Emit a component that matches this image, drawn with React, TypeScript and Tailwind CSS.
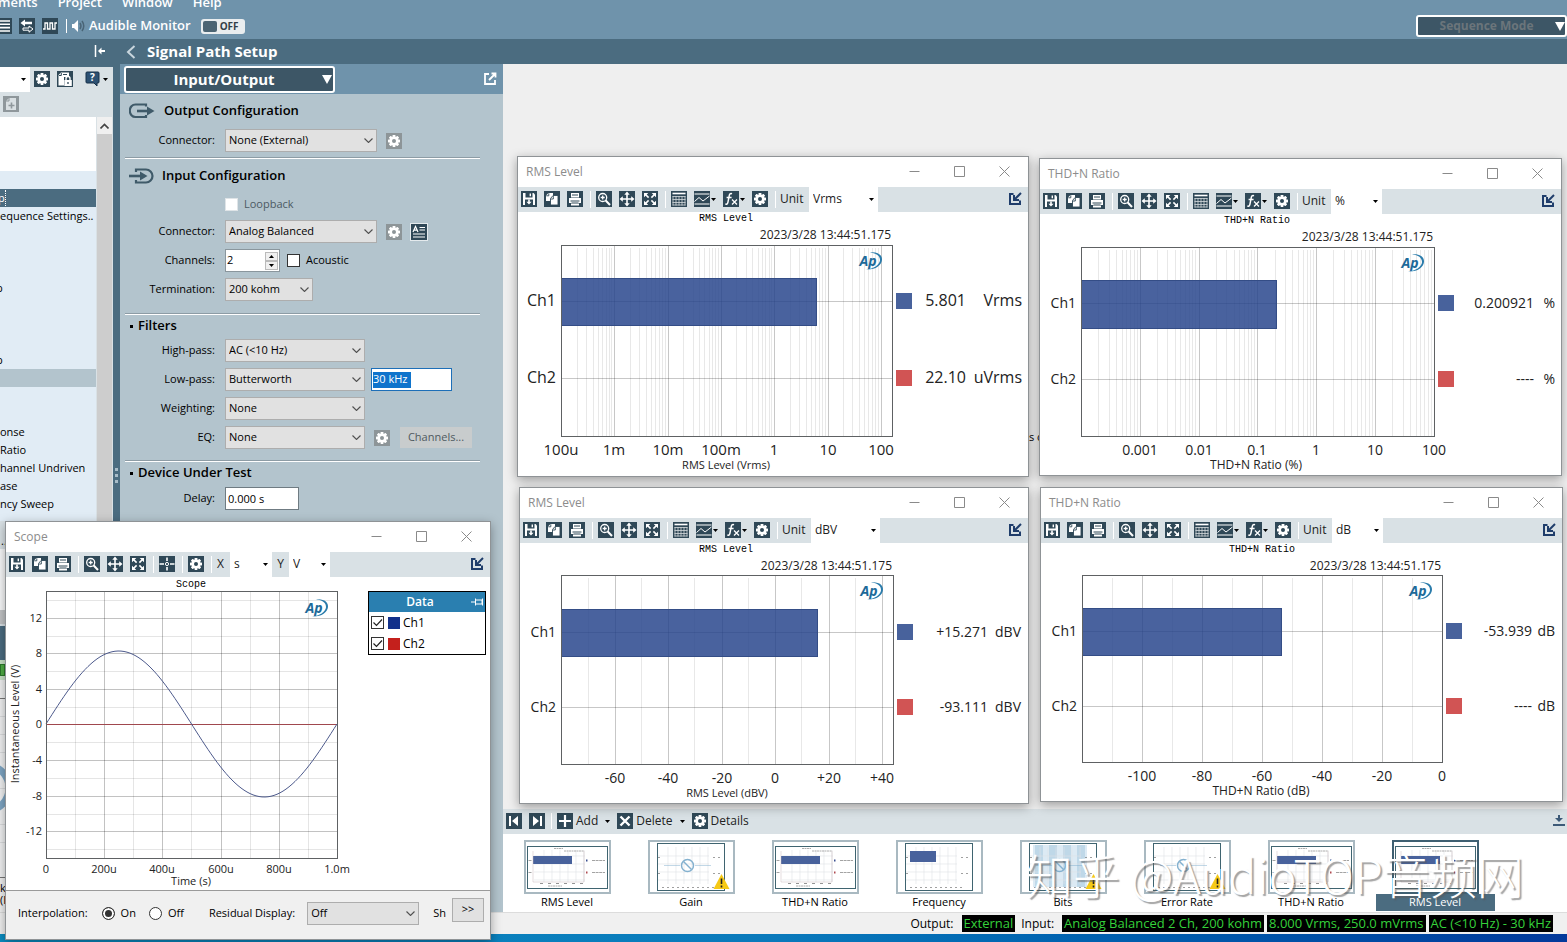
import React from "react";

/* ---------- icons ---------- */

type IconName =
  | "save" | "copy" | "print" | "zoom" | "move" | "expand" | "table" | "graph"
  | "fx" | "gear" | "cross" | "list" | "swap" | "wave" | "lock" | "first"
  | "last" | "plus" | "times" | "card" | "addPage";

const GEAR_TEETH = [0, 45, 90, 135, 180, 225, 270, 315];

function Gear({ hole }: { hole: string }) {
  return (
    <g>
      {GEAR_TEETH.map((a) => (
        <rect key={a} x="6.6" y="2" width="2.800" height="4" rx="0.4" fill="#fff" transform={`rotate(${a} 8 8)`} />
      ))}
      <circle cx="8" cy="8" r="4.500" fill="#fff" />
      <circle cx="8" cy="8" r="2" fill={hole} />
    </g>
  );
}

function glyph(name: IconName, bg: string) {
  const line = { stroke: "#fff", fill: "none", strokeWidth: 1.3 };
  switch (name) {
    case "save":
      return (
        <g>
          <path d="M2 2h10.5L14 3.5V14H2z" fill="#fff" />
          <path d="M4.500 2h7v4.500h-7zM4 8.500h8V14H4z" fill={bg} />
          <path d="M7.200 8.500h1.600v2.200h1.800L8 13.400l-2.600-2.700h1.800z" fill="#fff" />
          <path d="M8.600 2.600h1.400v2.600H8.600z" fill="#fff" />
        </g>
      );
    case "copy":
      return (
        <g>
          <path d="M2 4.500L4.500 2H9v8H2z" fill="#fff" />
          <path d="M6.500 7.500L9 4.500H14V14H6.500z" fill="#fff" stroke={bg} strokeWidth="0.9" />
          <path d="M4.800 2.300v2.500H2.300M9.300 5v3H6.800" stroke={bg} strokeWidth="0.9" fill="none" />
        </g>
      );
    case "print":
      return (
        <g>
          <path d="M4 2h8v4.500H4zM2 7h12v5H2z" fill="#fff" />
          <path d="M5 4h6M3.500 10h9M4.500 12h7" stroke={bg} strokeWidth="1" />
          <path d="M4 12.500h8V14.500H4z" fill="#fff" />
        </g>
      );
    case "zoom":
      return (
        <g {...line}>
          <circle cx="6.700" cy="6.500" r="4" />
          <path d="M4.700 6.500h4M6.700 4.500v4" />
          <path d="M9.700 9.500L14 14" strokeWidth="2" />
        </g>
      );
    case "move":
      return (
        <g>
          <path d="M8 3v10M3 8h10" {...line} strokeWidth={1.600} />
          <path d="M8 0.500l2.700 3.300H5.300zM8 15.500l2.700-3.300H5.300zM0.500 8l3.300-2.700v5.400zM15.500 8l-3.300-2.700v5.400z" fill="#fff" />
        </g>
      );
    case "expand":
      return (
        <g>
          <path d="M3 3l3.600 3.600M13 3L9.400 6.600M3 13l3.600-3.600M13 13L9.400 9.400" stroke="#fff" strokeWidth="1.600" />
          <path d="M2 2h4.300L2 6.300zM14 2v4.300L9.700 2zM2 14V9.700L6.300 14zM14 14H9.700L14 9.700z" fill="#fff" />
        </g>
      );
    case "table":
      return (
        <g>
          <path d="M1.500 2.500h13" stroke="#fff" strokeWidth="1.600" />
          <path d="M1.500 5.500h13M1.500 8.500h13M1.500 11.500h13M1.500 14h13M2 5v9.500M5 5v9.500M8 5v9.500M11 5v9.500M14 5v9.500" stroke="#fff" strokeWidth="0.800" opacity="0.800" />
        </g>
      );
    case "graph":
      return (
        <g>
          <path d="M0.500 3h15M0.500 13h15" stroke="#fff" strokeWidth="1.200" />
          <path d="M0.500 10.500L5 6.500L9 10L15.500 5" {...line} strokeWidth={1} />
        </g>
      );
    case "fx":
      return (
        <g {...line}>
          <path d="M9 2.800C7.300 2 6.500 3 6.200 4.800L4.900 11.400C4.600 13 3.600 13.600 2.300 12.900M3.600 6.500h5" strokeWidth="1.500" />
          <path d="M9 8.500l5 5M14 8.500l-5 5" />
        </g>
      );
    case "gear":
      return <Gear hole={bg} />;
    case "cross":
      return (
        <g {...line}>
          <path d="M8 1.500v3.500M8 11v3.500M0.500 8H5M11 8h4.500" strokeWidth="1.600" />
          <circle cx="8" cy="8" r="1.600" strokeWidth="1" />
        </g>
      );
    case "list":
      return <path d="M2 3h12M2 6.300h12M2 9.600h12M2 13h12" stroke="#fff" strokeWidth="1.600" />;
    case "swap":
      return (
        <g>
          <path d="M1.500 5L6 1.500v2.200h7v2.600H6v2.200z" fill="#fff" />
          <path d="M14 11l-4-3v2H4v2.200h6v2z" fill="none" stroke="#fff" />
        </g>
      );
    case "wave":
      return <path d="M1 11h2V5h2.500v6H8V5h2.500v6H13V5h2" {...line} />;
    case "lock":
      return (
        <g>
          <path d="M1.500 4L4 1.500h8V6H7v8.500H1.500z" fill="#fff" />
          <path d="M4.300 2v2.500H2" stroke={bg} fill="none" />
          <path d="M6 3.500h4" stroke={bg} />
          <rect x="7.300" y="9" width="7.500" height="6" fill="#fff" />
          <path d="M9 9V7.500a2 2 0 0 1 4 0V9" stroke="#fff" strokeWidth="1.400" fill="none" />
          <path d="M11 11v2" stroke={bg} strokeWidth="1.300" />
        </g>
      );
    case "first":
      return <path d="M3 3h2v10H3zM12 3v10L6 8z" fill="#fff" />;
    case "last":
      return <path d="M11 3h2v10h-2zM4 3v10l6-5z" fill="#fff" />;
    case "plus":
      return <path d="M8 2v12M2 8h12" stroke="#fff" strokeWidth="2.200" />;
    case "times":
      return <path d="M3.500 3.500l9 9M12.500 3.500l-9 9" stroke="#fff" strokeWidth="2.400" />;
    case "card":
      return (
        <g>
          <path d="M2 8L4.500 2.500L7 8M2.800 6.200h3.400" stroke="#fff" strokeWidth="1.200" fill="none" />
          <path d="M8.500 3.500H14M8.500 6H14M2 10h12M2 13h12" stroke="#fff" strokeWidth="1.200" />
        </g>
      );
    case "addPage":
      return (
        <g>
          <path d="M3 5l3-3h7v12H3z" fill="#d9dfe2" />
          <path d="M6 2v3H3" stroke={bg} fill="none" />
          <path d="M8.500 6.500v6M5.500 9.500h6" stroke={bg} strokeWidth="1.600" />
        </g>
      );
  }
}

function Icon({ name, bg = "#2f4857" }: { name: IconName; bg?: string }) {
  return (
    <svg viewBox="0 0 16 16" className="block size-4 shrink-0" aria-hidden="true">
      <rect width="16" height="16" fill={bg} />
      {glyph(name, bg)}
    </svg>
  );
}

function Caret({ className = "" }: { className?: string }) {
  return (
    <svg viewBox="0 0 5 3" className={`block h-[3px] w-[5px] shrink-0 ${className}`} aria-hidden="true">
      <path d="M0 0h5L2.500 3z" fill="#000" />
    </svg>
  );
}

function IconButton({ name, label, bg, caret }: { name: IconName; label: string; bg?: string; caret?: boolean }) {
  return (
    <button type="button" aria-label={label} className="flex shrink-0 items-center gap-px">
      <Icon name={name} bg={bg} />
      {caret && <Caret />}
    </button>
  );
}

function Dock() {
  return (
    <svg viewBox="0 0 14 14" className="block size-[14px]" fill="none" stroke="#1f3d6b" strokeWidth="2" aria-hidden="true">
      <path d="M5.500 2H2v10h10V8.500" />
      <path d="M13 1L6.500 7.500" />
      <path d="M6 3v5h5" />
    </svg>
  );
}

/* ---------- form parts ---------- */

function Select({ id, value, width }: { id: string; value: string; width: string }) {
  return (
    <span className={`grid h-[23px] shrink-0 items-center ${width}`}>
      <select
        id={id}
        defaultValue={value}
        className="col-start-1 row-start-1 h-full w-full appearance-none border border-[#adadad] bg-[#e1e1e1] pl-[3px] text-black"
      >
        <option>{value}</option>
      </select>
      <svg viewBox="0 0 9 5" className="pointer-events-none col-start-1 row-start-1 mr-1 h-[5px] w-[9px] justify-self-end" aria-hidden="true">
        <path d="M0.500 0.500l4 4l4-4" fill="none" stroke="#505050" strokeWidth="1.100" />
      </svg>
    </span>
  );
}

function UnitSelect({ label, value, width }: { label: string; value: string; width: string }) {
  return (
    <span className={`grid h-[25px] shrink-0 items-center bg-white ${width}`}>
      <select aria-label={label} defaultValue={value} className="col-start-1 row-start-1 h-full w-full appearance-none bg-white pl-1 text-[12px] text-[#222]">
        <option>{value}</option>
      </select>
      <Caret className="pointer-events-none col-start-1 row-start-1 mr-1 justify-self-end" />
    </span>
  );
}

function Field({ label, htmlFor, children }: { label: string; htmlFor: string; children: React.ReactNode }) {
  return (
    <div className="flex h-[29px] items-center">
      <label htmlFor={htmlFor} className="mr-[10px] w-[95px] shrink-0 text-right">{label}</label>
      {children}
    </div>
  );
}

function Rule({ className = "" }: { className?: string }) {
  return <div className={`mr-[23px] ml-[5px] h-[2px] border-t border-b border-t-[#8d9ca5] border-b-white ${className}`} />;
}

function GroupTitle({ children }: { children: React.ReactNode }) {
  return (
    <h3 className="flex h-[22px] items-center gap-[5px] pl-[10px] text-[13px] font-semibold">
      <span className="size-[3px] bg-black" />
      {children}
    </h3>
  );
}

/* ---------- windows ---------- */

function Win({ title, place, bar, children }: { title: string; place: string; bar: React.ReactNode; children: React.ReactNode }) {
  return (
    <section aria-label={title} className={`absolute flex flex-col border border-[#8f9396] bg-white shadow-[0_3px_10px_rgba(0,0,0,0.35)] ${place}`}>
      <header className="flex h-[30px] shrink-0 items-center justify-between pr-[18px] pb-px pl-2 text-[12px] text-[#8c8c8c]">
        <h2>{title}</h2>
        <div className="flex items-center gap-[34px]">
          <button type="button" aria-label="Minimize">
            <svg viewBox="0 0 11 11" className="block size-[11px]"><path d="M0.500 5.500h10" stroke="#8a8a8a" /></svg>
          </button>
          <button type="button" aria-label="Maximize">
            <svg viewBox="0 0 11 11" className="block size-[11px]"><path d="M0.500 0.500h10v10H0.500z" stroke="#8a8a8a" fill="none" /></svg>
          </button>
          <button type="button" aria-label="Close">
            <svg viewBox="0 0 11 11" className="block size-[11px]"><path d="M0.500 0.500l10 10M10.500 0.500l-10 10" stroke="#8a8a8a" /></svg>
          </button>
        </div>
      </header>
      <div className="flex h-[25px] shrink-0 items-center bg-[#d9e1e5] pr-[6px] pb-px pl-[3px] text-[12px] text-[#222]">
        {bar}
        <button type="button" aria-label="Dock window" className="ml-auto"><Dock /></button>
      </div>
      {children}
    </section>
  );
}

function Sep() {
  return <span className="h-[17px] w-px shrink-0 bg-white" />;
}

function FileTools() {
  return (
    <div className="mr-[7px] flex gap-[7px]">
      <IconButton name="save" label="Save" />
      <IconButton name="copy" label="Copy" />
      <IconButton name="print" label="Print" />
    </div>
  );
}

function ViewTools() {
  return (
    <div className="mr-[7px] ml-[5px] flex gap-[7px]">
      <IconButton name="zoom" label="Zoom" />
      <IconButton name="move" label="Pan" />
      <IconButton name="expand" label="Fit" />
    </div>
  );
}

function MeterTools({ unit, width }: { unit: string; width: string }) {
  return (
    <>
      <FileTools />
      <Sep />
      <ViewTools />
      <Sep />
      <div className="mr-[7px] ml-[5px] flex gap-[7px]">
        <IconButton name="table" label="Table" />
        <IconButton name="graph" label="Graph" caret />
        <IconButton name="fx" label="Functions" caret />
        <IconButton name="gear" label="Settings" />
      </div>
      <Sep />
      <span className="w-[33px] shrink-0 pl-1">Unit</span>
      <UnitSelect label="Unit" value={unit} width={width} />
    </>
  );
}

function ApLogo({ x, y }: { x: number; y: number }) {
  return (
    <g transform={`translate(${x} ${y})`}>
      <text x="-2" y="5" textAnchor="middle" fontSize="14" fontWeight="700" fontStyle="italic" fill="#1d6a99">Ap</text>
      <path d="M0 -8.500C8 -9.500 12.500 -5.500 12 -1C11.300 4.500 5 9.200 -4 8.500C3.500 8 9.600 4 10 -0.700C10.200 -5 6.500 -8 0 -8.500z" fill="#2b7cab" />
    </g>
  );
}

interface Channel { name: string; y: number; value: string; unit: string; color: string }

interface BarPlot {
  view: string;
  title: string;
  titleX: number;
  titleY: number;
  stampY: number;
  axis: string;
  axisX: number;
  axisY: number;
  axisSize: number;
  box: [number, number, number, number];
  ticks: [number, string][];
  tickY: number;
  tickSize: number;
  textSize: number;
  nameX: number;
  minor: number[];
  bar: [number, number, number];
  swatchX: number;
  valueX: number;
  unitX: number;
  channels: Channel[];
}

function logMinor(start: number, decade: number, end: number) {
  const out: number[] = [];
  for (let x = start; x < end; x += decade) {
    for (let m = 2; m < 10; m++) {
      const p = x + decade * Math.log10(m);
      if (p < end) out.push(p);
    }
  }
  return out;
}

function steps(start: number, step: number, end: number) {
  const out: number[] = [];
  for (let x = start; x < end; x += step) out.push(x);
  return out;
}

function BarChart(p: BarPlot) {
  const [l, t, r, b] = p.box;
  return (
    <svg viewBox={p.view} className="block w-full" fontFamily='"Open Sans", sans-serif' fill="#222">
      <text x={p.titleX} y={p.titleY} textAnchor="middle" fontSize="10" fill="#000" fontFamily='"Liberation Mono", monospace'>{p.title}</text>
      <text x={r - 1} y={p.stampY} textAnchor="end" fontSize="12">2023/3/28 13:44:51.175</text>
      <g stroke="#000" strokeOpacity="0.090" shapeRendering="crispEdges">
        {p.minor.map((x) => <path key={x} d={`M${x} ${t + 3}V${b}`} />)}
      </g>
      <g stroke="#000" strokeOpacity="0.220" shapeRendering="crispEdges">
        {p.ticks.map(([x]) => <path key={x} d={`M${x} ${t}V${b}`} />)}
        {p.channels.map((c) => <path key={c.name} d={`M${l} ${c.y}H${r}`} />)}
      </g>
      <rect x={l} y={p.bar[0]} width={p.bar[2] - l} height={p.bar[1] - p.bar[0]} fill="#26448c" fillOpacity="0.840" stroke="#344d86" shapeRendering="crispEdges" />
      <rect x={l} y={t} width={r - l} height={b - t} fill="none" stroke="#5e6163" shapeRendering="crispEdges" />
      <ApLogo x={r - 22} y={t + 16} />
      {p.ticks.map(([x, s]) => <text key={s} x={x} y={p.tickY} textAnchor="middle" fontSize={p.tickSize}>{s}</text>)}
      <text x={p.axisX} y={p.axisY} textAnchor="middle" fontSize={p.axisSize}>{p.axis}</text>
      {p.channels.map((c) => (
        <g key={c.name} fontSize={p.textSize}>
          <text x={p.nameX} y={c.y + 5} textAnchor="end">{c.name}</text>
          <rect x={p.swatchX} y={c.y - 8} width="16" height="16" fill={c.color} />
          <text x={p.valueX} y={c.y + 5} textAnchor="end">{c.value}</text>
          <text x={p.unitX} y={c.y + 5} textAnchor="end">{c.unit}</text>
        </g>
      ))}
    </svg>
  );
}

const BLUE = "#48629c";
const RED = "#d15454";

const rmsV: BarPlot = {
  view: "518 212 510 263", title: "RMS Level", titleX: 726, titleY: 221, stampY: 239,
  axis: "RMS Level (Vrms)", axisX: 726, axisY: 469, axisSize: 11, box: [561, 245, 892, 436],
  ticks: [[561, "100u"], [614, "1m"], [668, "10m"], [721, "100m"], [774, "1"], [828, "10"], [881, "100"]],
  tickY: 455, tickSize: 15, textSize: 16, nameX: 556, minor: logMinor(561, 53.3, 892),
  bar: [278, 325, 816], swatchX: 896, valueX: 966, unitX: 1022,
  channels: [
    { name: "Ch1", y: 301, value: "5.801", unit: "Vrms", color: BLUE },
    { name: "Ch2", y: 378, value: "22.10", unit: "uVrms", color: RED },
  ],
};

const thdPct: BarPlot = {
  view: "1040 214 521 260", title: "THD+N Ratio", titleX: 1257, titleY: 223, stampY: 241,
  axis: "THD+N Ratio (%)", axisX: 1256, axisY: 469, axisSize: 12, box: [1081, 247, 1434, 436],
  ticks: [[1140, "0.001"], [1199, "0.01"], [1257, "0.1"], [1316, "1"], [1375, "10"], [1434, "100"]],
  tickY: 455, tickSize: 14, textSize: 14, nameX: 1076, minor: logMinor(1081, 58.8, 1434),
  bar: [280, 328, 1276], swatchX: 1438, valueX: 1534, unitX: 1555,
  channels: [
    { name: "Ch1", y: 303, value: "0.200921", unit: "%", color: BLUE },
    { name: "Ch2", y: 379, value: "----", unit: "%", color: RED },
  ],
};

const rmsDb: BarPlot = {
  view: "520 543 508 259", title: "RMS Level", titleX: 726, titleY: 552, stampY: 570,
  axis: "RMS Level (dBV)", axisX: 727, axisY: 797, axisSize: 11, box: [561, 575, 893, 764],
  ticks: [[615, "-60"], [668, "-40"], [722, "-20"], [775, "0"], [829, "+20"], [882, "+40"]],
  tickY: 783, tickSize: 14, textSize: 14, nameX: 556, minor: steps(588, 53.4, 893),
  bar: [609, 656, 817], swatchX: 897, valueX: 988, unitX: 1021,
  channels: [
    { name: "Ch1", y: 632, value: "+15.271", unit: "dBV", color: BLUE },
    { name: "Ch2", y: 707, value: "-93.111", unit: "dBV", color: RED },
  ],
};

const thdDb: BarPlot = {
  view: "1041 543 521 257", title: "THD+N Ratio", titleX: 1262, titleY: 552, stampY: 570,
  axis: "THD+N Ratio (dB)", axisX: 1261, axisY: 795, axisSize: 12, box: [1082, 575, 1442, 762],
  ticks: [[1142, "-100"], [1202, "-80"], [1262, "-60"], [1322, "-40"], [1382, "-20"], [1442, "0"]],
  tickY: 781, tickSize: 14, textSize: 14, nameX: 1077, minor: steps(1112, 60, 1442),
  bar: [608, 655, 1281], swatchX: 1446, valueX: 1532, unitX: 1555,
  channels: [
    { name: "Ch1", y: 631, value: "-53.939", unit: "dB", color: BLUE },
    { name: "Ch2", y: 706, value: "----", unit: "dB", color: RED },
  ],
};

function ScopePlot() {
  const wave = steps(0, 3, 292)
    .map((x, i) => `${i ? "L" : "M"}${46 + x} ${(724 - 73 * Math.sin((x / 291) * 2 * Math.PI)).toFixed(2)}`)
    .join("");
  const xs: [number, string][] = [[46, "0"], [104, "200u"], [162, "400u"], [221, "600u"], [279, "800u"], [337, "1.0m"]];
  const ys: [number, string][] = [[618, "12"], [653, "8"], [689, "4"], [724, "0"], [760, "-4"], [796, "-8"], [831, "-12"]];
  return (
    <svg viewBox="6 577 334 312" className="block h-[312px] w-[334px] shrink-0 overflow-visible" fontFamily='"Open Sans", sans-serif' fontSize="11" fill="#222">
      <text x="191" y="587" textAnchor="middle" fontSize="10" fill="#000" fontFamily='"Liberation Mono", monospace'>Scope</text>
      <g stroke="#000" strokeOpacity="0.100" shapeRendering="crispEdges">
        {[75, 133, 191, 250, 308].map((x) => <path key={x} d={`M${x} 592V858`} />)}
        {[600, 636, 671, 707, 742, 778, 814, 849].map((y) => <path key={y} d={`M46 ${y}H337`} />)}
      </g>
      <g stroke="#000" strokeOpacity="0.240" shapeRendering="crispEdges">
        {xs.slice(1, 5).map(([x]) => <path key={x} d={`M${x} 592V858`} />)}
        {ys.map(([y]) => <path key={y} d={`M46 ${y}H337`} />)}
      </g>
      <path d="M46 724H337" stroke="#a0484e" shapeRendering="crispEdges" />
      <path d={wave} fill="none" stroke="#4d5a8c" />
      <rect x="46" y="591" width="291" height="267" fill="none" stroke="#5e6163" shapeRendering="crispEdges" />
      <ApLogo x={316} y={608} />
      {xs.map(([x, s]) => <text key={s} x={x} y="873" textAnchor="middle">{s}</text>)}
      {ys.map(([y, s]) => <text key={s} x="42" y={y + 4} textAnchor="end">{s}</text>)}
      <text x="191" y="885" textAnchor="middle">Time (s)</text>
      <text transform="translate(19 724) rotate(-90)" textAnchor="middle">Instantaneous Level (V)</text>
    </svg>
  );
}

function Check({ id, label, color }: { id: string; label: string; color: string }) {
  return (
    <div className="flex h-[21px] items-center pl-[2px]">
      <span className="grid size-[13px] place-items-center">
        <input id={id} type="checkbox" defaultChecked className="col-start-1 row-start-1 size-[13px] appearance-none border border-[#333] bg-white" />
        <svg viewBox="0 0 11 11" className="pointer-events-none col-start-1 row-start-1 size-[11px]"><path d="M1.500 5.500l3 3l5.500-6" fill="none" stroke="#222" strokeWidth="1.200" /></svg>
      </span>
      <span className={`ml-1 size-3 ${color}`} />
      <label htmlFor={id} className="ml-[3px] text-[12px]">{label}</label>
    </div>
  );
}

function Radio({ id, label, on }: { id: string; label: string; on?: boolean }) {
  return (
    <>
      <input
        id={id}
        type="radio"
        name="interpolation"
        defaultChecked={on}
        className="size-[13px] appearance-none rounded-full border border-[#333] bg-white checked:bg-[#333] checked:shadow-[inset_0_0_0_2px_#fff]"
      />
      <label htmlFor={id} className="ml-[6px]">{label}</label>
    </>
  );
}

/* ---------- readings strip ---------- */

type ThumbKind = "wide" | "none" | "short" | "stripes";

function Thumb({ kind, warn }: { kind: ThumbKind; warn?: boolean }) {
  const wide = kind === "wide";
  const bars = kind === "wide" || kind === "short";
  const x = wide ? 1 : 7;
  const w = wide ? 80 : 67;
  const y = wide ? 4 : 1;
  const h = wide ? 42 : 47;
  return (
    <svg viewBox="0 0 83 50" className="block h-[50px] w-[83px]" aria-hidden="true">
      <rect x={x + 0.5} y={y + 0.5} width={w} height={h} fill="#fff" stroke="#3f6470" />
      {kind === "stripes" && <rect x="11" y="3" width="54" height="42" fill="#dceaf4" />}
      {kind === "stripes" && [13, 27, 41, 55].map((s) => <rect key={s} x={s} y="3" width="8" height="42" fill="#bfd8e8" />)}
      <g stroke="#dfe3e6" strokeWidth="0.600">
        {[18, 26, 34, 42, 50, 58].map((s) => <path key={s} d={`M${s} ${y + 4}V${y + h - 6}`} />)}
        {[14, 22, 30, 38].map((s) => <path key={s} d={`M8 ${s}H59`} />)}
      </g>
      {bars && <rect x={wide ? 7 : 12} y={wide ? 14 : 9} width={wide ? 39 : 26} height={wide ? 8 : 11} fill={BLUE} />}
      {wide && (
        <g>
          <path d="M28 6.500h9M38 9h20M22 44h14" stroke="#999" strokeWidth="0.800" strokeDasharray="2 0.500" />
          <path d="M7 9v31h51V9" fill="none" stroke="#c9b8bd" strokeWidth="0.500" />
          <path d="M60 18.500h1.500" stroke="#3a4f90" strokeWidth="2" />
          <path d="M60 30.500h1.500" stroke="#b04a50" strokeWidth="2" />
          <path d="M66 18.500h13M66 30.500h13M2.500 18.500h3M2.500 30.500h3" stroke="#999" strokeWidth="0.900" strokeDasharray="3 0.600" />
          <path d="M14 41.500h44" stroke="#888" strokeWidth="0.900" strokeDasharray="3 5" />
        </g>
      )}
      {!wide && <path d="M63 15.500h10M63 31.500h10M8 15.500h3M8 31.500h3M12 45.500h52" stroke="#888" strokeWidth="0.800" strokeDasharray="2 3" />}
      {(kind === "none" || kind === "stripes") && (
        <g fill="none" stroke="#84b1cf" strokeWidth="1.500">
          <path d="M14 23.500h16M45 23.500h16" strokeWidth="0.500" />
          <circle cx="37.500" cy="23.500" r="6" />
          <path d="M33.500 19.500l8 8" />
        </g>
      )}
      {warn && (
        <g>
          <path d="M71.500 32l8 15h-16z" fill="#f6c915" />
          <path d="M71.500 36.500v5.500M71.500 43.500v2" stroke="#222" strokeWidth="1.600" />
        </g>
      )}
    </svg>
  );
}

const readings: { label: string; kind: ThumbKind; warn?: boolean; active?: boolean }[] = [
  { label: "RMS Level", kind: "wide" },
  { label: "Gain", kind: "none", warn: true },
  { label: "THD+N Ratio", kind: "wide" },
  { label: "Frequency", kind: "short" },
  { label: "Bits", kind: "stripes", warn: true },
  { label: "Error Rate", kind: "none", warn: true },
  { label: "THD+N Ratio", kind: "wide" },
  { label: "RMS Level", kind: "wide", active: true },
];

/* ---------- navigator ---------- */

const tree = [
  "", "p", "equence Settings..", "", "", "", "p", "", "", "", "p", "", "", "",
  "onse", "Ratio", "hannel Undriven", "ase", "ncy Sweep", "",
];

function Navigator() {
  return (
    <aside className="flex w-[113px] shrink-0 flex-col overflow-hidden bg-[#d9e1e5]">
      <div className="flex h-7 shrink-0 items-center justify-end bg-[#4b6c80] pr-[7px] pb-1">
        <button type="button" aria-label="Collapse panel">
          <svg viewBox="0 0 12 14" className="block h-[14px] w-3"><path d="M1.500 1v12" stroke="#fff" strokeWidth="1.500" /><path d="M4 7l3.500-3.500v2.500H11v2H7.500v2.500z" fill="#fff" /></svg>
        </button>
      </div>
      <div className="flex h-[25px] shrink-0 items-center pb-px">
        <UnitSelect label="Project" value="" width="w-[30px]" />
        <div className="ml-1 flex gap-[7px]">
          <IconButton name="gear" label="Settings" />
          <IconButton name="lock" label="Lock" />
        </div>
        <button type="button" aria-label="Help" className="ml-[12px] flex items-center gap-[2px]">
          <svg viewBox="0 0 16 16" className="block size-4">
            <path d="M2 1h11a1 1 0 0 1 1 1v9a1 1 0 0 1-1 1h-1v3l-3-3H2a1 1 0 0 1-1-1V2a1 1 0 0 1 1-1z" fill="#2d5173" stroke="#173048" />
            <text x="7.500" y="10" textAnchor="middle" fontSize="10" fontWeight="700" fill="#fff" fontFamily="Open Sans">?</text>
          </svg>
          <Caret />
        </button>
      </div>
      <div className="flex h-[25px] shrink-0 items-center pb-px pl-[3px]">
        <IconButton name="addPage" label="Add page" bg="#8f979b" />
      </div>
      <div className="flex h-[404px] shrink-0">
        <div className="mr-px flex w-24 flex-col overflow-hidden bg-[#e1ecf5] whitespace-nowrap">
          <div className="h-[54px] shrink-0 bg-white" />
          <ul>
            {tree.map((t, i) => (
              <li
                key={i}
                className={
                  i === 1
                    ? "flex h-[18px] items-center bg-[#4b6c80] text-white"
                    : i === 11
                      ? "h-[18px] bg-[#b3c4cd]"
                      : "flex h-[18px] items-center"
                }
              >
                {i === 1 || i === 6 || i === 10 ? <span className={i === 1 ? "-ml-[2px] border-r border-dotted border-white" : "-ml-1"}>{t}</span> : t}
              </li>
            ))}
          </ul>
        </div>
        <div className="flex w-[15px] flex-col bg-[#cdcdcd]">
          <div className="grid h-[17px] place-items-center bg-[#f0f0f0]">
            <svg viewBox="0 0 9 6" className="block h-[6px] w-[9px]"><path d="M0.500 5.500l4-4l4 4" fill="none" stroke="#444" strokeWidth="1.600" /></svg>
          </div>
        </div>
      </div>
      <div className="h-7 shrink-0 pt-3 pl-px">..</div>
      <div className="h-[61px] shrink-0 bg-[#f8f9fa]" />
      <div className="h-[14px] shrink-0 bg-[#c2c4c6]" />
      <div className="mt-[2px] h-[34px] shrink-0 bg-[#4b6c80]" />
      <div className="flex h-5 shrink-0 items-center bg-[#c9e3c8]"><span className="h-3 w-[5px] border border-[#2b7a2b] bg-[#4fae45]" /></div>
      <svg viewBox="0 0 113 198" className="block h-[198px] w-[113px] shrink-0 bg-[#f0f1f2]" fill="none">
        <path d="M0 18.500h113M0 197.500h113" stroke="#777" />
        <path d="M0 36.500h113M0 54.500h113M0 72.500h113M0 108.500h113M0 126.500h113M0 144.500h113M0 162.500h113" stroke="#dadcde" />
        <circle cx="-14" cy="108" r="23" stroke="#7ea6c4" strokeWidth="7" />
      </svg>
      <div className="flex-1 bg-[#f0f0f0] pt-1 leading-3 whitespace-nowrap"><p>k</p><p>(I</p></div>
    </aside>
  );
}

/* ---------- signal path ---------- */

function SignalPath() {
  return (
    <section className="flex w-[383px] shrink-0 flex-col bg-[#b3c4cd]" aria-label="Signal Path Setup">
      <header className="flex h-[25px] shrink-0 items-center gap-[11px] bg-[#4b6c80] pl-[6px] text-white">
        <svg viewBox="0 0 10 14" className="block h-[14px] w-[10px]"><path d="M8.500 1L2 7l6.500 6" fill="none" stroke="#c9d6de" strokeWidth="2" /></svg>
        <h1 className="text-[15px] font-bold">Signal Path Setup</h1>
      </header>
      <div className="flex h-[30px] shrink-0 items-center justify-between bg-[#6f93ab] pr-[6px] pl-1">
        <button type="button" className="flex h-[27px] w-[211px] items-center rounded-[3px] border-2 border-white bg-[#3d5666] text-[15px] font-bold text-white">
          <span className="flex-1 text-center">Input/Output</span>
          <svg viewBox="0 0 10 9" className="mr-px block h-[9px] w-[10px]"><path d="M0 0h10L5 9z" fill="#fff" /></svg>
        </button>
        <button type="button" aria-label="Pop out">
          <svg viewBox="0 0 14 14" className="block size-[14px]" fill="none" stroke="#fff" strokeWidth="1.800"><path d="M6 2H2v10h10V8" /><path d="M6 8l6-6M8.500 1.500h4v4" /></svg>
        </button>
      </div>
      <form className="flex flex-col">
        <h2 className="flex h-[34px] items-center gap-[9px] pl-[9px] text-[13px] font-semibold">
          <svg viewBox="0 0 26 16" className="block h-4 w-[26px]"><path d="M17 3.500V1.500H6.500a5.500 6 0 0 0 0 12.500H17v-2" fill="none" stroke="#3f5a69" strokeWidth="2.200" /><path d="M8 8h12" stroke="#3f5a69" strokeWidth="2.600" /><path d="M18 3.500L25.500 8L18 12.500z" fill="#3f5a69" /></svg>
          Output Configuration
        </h2>
        <div className="-mt-[2px] mb-[2px]">
          <Field label="Connector:" htmlFor="out-conn">
            <Select id="out-conn" value="None (External)" width="w-[152px]" />
            <span className="ml-[9px]"><IconButton name="gear" label="Output settings" bg="#8d9598" /></span>
          </Field>
        </div>
        <Rule />
        <h2 className="flex h-[34px] items-center gap-2 pl-[9px] text-[13px] font-semibold">
          <svg viewBox="0 0 25 16" className="block h-4 w-[25px]"><path d="M7 4V1.500h10a6.500 6.500 0 0 1 0 13H7V12" fill="none" stroke="#3f5a69" strokeWidth="2.200" /><path d="M0 8h13" stroke="#3f5a69" strokeWidth="2.600" /><path d="M11 3.500l7.500 4.500l-7.500 4.500z" fill="#3f5a69" /></svg>
          Input Configuration
        </h2>
        <div className="mb-[2px] flex h-[22px] items-center pl-[105px] text-[#4c5a63]">
          <input id="loopback" type="checkbox" className="size-[13px] appearance-none border border-[#dfe4e7] bg-white" />
          <label htmlFor="loopback" className="ml-[6px]">Loopback</label>
        </div>
        <Field label="Connector:" htmlFor="in-conn">
          <Select id="in-conn" value="Analog Balanced" width="w-[152px]" />
          <div className="ml-[9px] flex items-center gap-2">
            <IconButton name="gear" label="Input settings" bg="#8d9598" />
            <span className="border border-[#e4eaed]"><IconButton name="card" label="Connector details" /></span>
          </div>
        </Field>
        <Field label="Channels:" htmlFor="channels">
          <span className="flex h-[23px] w-[55px] items-center border border-[#8a969d] bg-white pr-px">
            <input id="channels" defaultValue="2" className="min-w-0 flex-1 bg-transparent pl-px" />
            <span className="flex flex-col">
              <button type="button" aria-label="More channels" className="grid h-[9px] w-[13px] place-items-center border border-[#bbb] bg-[#f0f0f0]"><Caret className="rotate-180" /></button>
              <button type="button" aria-label="Fewer channels" className="grid h-[9px] w-[13px] place-items-center border border-[#bbb] bg-[#f0f0f0]"><Caret /></button>
            </span>
          </span>
          <input id="acoustic" type="checkbox" className="ml-[7px] size-[13px] appearance-none border border-[#333] bg-white" />
          <label htmlFor="acoustic" className="ml-[6px]">Acoustic</label>
        </Field>
        <Field label="Termination:" htmlFor="term"><Select id="term" value="200 kohm" width="w-[88px]" /></Field>
        <Rule className="mt-[9px]" />
        <div className="-mb-px"><GroupTitle>Filters</GroupTitle></div>
        <Field label="High-pass:" htmlFor="hp"><Select id="hp" value="AC (<10 Hz)" width="w-[140px]" /></Field>
        <Field label="Low-pass:" htmlFor="lp">
          <Select id="lp" value="Butterworth" width="w-[140px]" />
          <span className="ml-[6px] grid h-[23px] w-[81px] items-center border border-[#1d6fb8] bg-white pl-px">
            <input aria-label="Low-pass frequency" defaultValue="30 kHz" className="h-4 w-[38px] bg-[#0f74cc] text-white" />
          </span>
        </Field>
        <Field label="Weighting:" htmlFor="wt"><Select id="wt" value="None" width="w-[140px]" /></Field>
        <Field label="EQ:" htmlFor="eq">
          <Select id="eq" value="None" width="w-[140px]" />
          <span className="ml-[9px]"><IconButton name="gear" label="EQ settings" bg="#8d9598" /></span>
          <button type="button" disabled className="ml-[10px] h-[21px] w-[72px] bg-[#c8cccd] text-[#4f5a60]">Channels...</button>
        </Field>
        <Rule className="mt-2" />
        <GroupTitle>Device Under Test</GroupTitle>
        <Field label="Delay:" htmlFor="delay">
          <input id="delay" defaultValue="0.000 s" className="h-[23px] w-[74px] border border-[#6f7b82] bg-white pl-[2px]" />
        </Field>
      </form>
    </section>
  );
}

/* ---------- page ---------- */

export default function App() {
  return (
    <div className='relative flex min-h-screen w-full flex-col overflow-hidden bg-[#f0f0f0] font-["Open_Sans","Noto_Sans_CJK_SC",sans-serif] text-[11px] text-black'>
      <header className="h-[39px] shrink-0 overflow-hidden bg-[#6f93ab] text-white">
        <nav className="-mt-[7px] flex h-5 items-center gap-5 text-[13px] font-semibold">
          <a href="#measurements" className="-ml-[2px]">ments</a>
          <a href="#project">Project</a>
          <a href="#window">Window</a>
          <a href="#help">Help</a>
        </nav>
        <div className="flex h-[26px] items-center">
          <div className="-ml-1 flex gap-[7px]">
            <IconButton name="list" label="List" />
            <IconButton name="swap" label="Swap" />
            <IconButton name="wave" label="Generator" />
          </div>
          <span className="ml-2 h-[14px] w-px bg-white" />
          <svg viewBox="0 0 16 14" className="ml-1 block h-[14px] w-4"><path d="M1 5h2l4-4v12L3 9H1z" fill="#fff" /><path d="M9 4q2 3 0 6M11 2q3.500 5 0 10" stroke="#4a6577" strokeWidth="1.500" fill="none" /></svg>
          <span className="ml-[2px] text-[13px] font-semibold">Audible Monitor</span>
          <button type="button" aria-pressed="false" className="ml-[10px] flex h-[15px] w-11 items-center gap-[3px] rounded-[3px] bg-[#e9edef] pl-[2px] text-[10px] font-bold text-[#333f47]">
            <span className="h-[11px] w-[14px] rounded-[2px] bg-[#4b6473]" />OFF
          </button>
          <button type="button" disabled className="ml-auto flex h-[22px] w-[151px] items-center rounded-[3px] border-2 border-white bg-[#3d5666] text-[12px] font-bold text-[#6b757b]">
            <span className="flex-1 text-center">Sequence Mode</span>
            <svg viewBox="0 0 10 9" className="block h-[9px] w-[10px]"><path d="M0 0h10L5 9z" fill="#fff" /></svg>
          </button>
        </div>
      </header>

      <div className="flex flex-1">
        <Navigator />
        <div className="grid w-[7px] shrink-0 place-items-center bg-[#4b6c80]">
          <svg viewBox="0 0 3 15" className="block h-[15px] w-[3px]" fill="#a8bcc8"><path d="M0 0h3v3H0zM0 6h3v3H0zM0 12h3v3H0z" /></svg>
        </div>
        <SignalPath />
        <main className="flex min-w-0 flex-1 flex-col">
          <div className="h-[25px] shrink-0 bg-[#4b6c80]" />
          <div className="flex-1 bg-[#efefef]" />
          <div className="flex h-[25px] shrink-0 items-center bg-[#d9e1e5] pb-px pl-[3px] text-[12px] text-[#222]">
            <IconButton name="first" label="First" />
            <span className="ml-[7px]"><IconButton name="last" label="Last" /></span>
            <span className="mr-[5px] ml-[6px] h-4 w-px bg-white" />
            <button type="button" className="flex items-center gap-[3px]"><Icon name="plus" />Add<Caret className="ml-1" /></button>
            <button type="button" className="ml-[7px] flex items-center gap-[3px]"><Icon name="times" />Delete<Caret className="ml-1" /></button>
            <button type="button" className="ml-[7px] flex items-center gap-[3px]"><Icon name="gear" />Details</button>
            <button type="button" aria-label="Hide readings" className="mr-[2px] ml-auto">
              <svg viewBox="0 0 12 12" className="block size-3" fill="#3d5a78"><path d="M5 0h2v3h3L6 7L2 3h3zM0 9h12v2H0z" /></svg>
            </button>
          </div>
          <div className="flex h-[78px] shrink-0 overflow-hidden bg-white pl-[2px]">
            {readings.map((r, i) => (
              <button type="button" key={i} className="flex w-[124px] shrink-0 flex-col items-center pt-[6px] text-[11px]">
                <span className={r.active ? "border-2 border-[#3f6072]" : "border-2 border-[#a9b9c1]"}><Thumb kind={r.kind} warn={r.warn} /></span>
                <span className={r.active ? "h-[17px] w-[119px] bg-[#4b6c80] leading-4 text-white" : "leading-4"}>{r.label}</span>
              </button>
            ))}
          </div>
        </main>
      </div>

      <footer className="flex h-[22px] shrink-0 items-center justify-end border-t border-[#dcdcdc] bg-[#f0f0f0] pr-[14px] text-[12px]">
        <span>Output:</span>
        <output className="mr-[6px] ml-2 bg-black px-[2px] text-[13px] leading-[17px] text-[#35d13b]">External</output>
        <span>Input:</span>
        <div className="ml-2 flex gap-[3px] text-[13px] leading-[17px] text-[#35d13b]">
          <output className="bg-black px-[2px]">Analog Balanced 2 Ch, 200 kohm</output>
          <output className="bg-black px-[2px]">8.000 Vrms, 250.0 mVrms</output>
          <output className="bg-black px-[2px]">AC (&lt;10 Hz) - 30 kHz</output>
        </div>
      </footer>
      <div className="h-2 shrink-0 bg-linear-to-r from-[#0a8cc0] via-[#0a79bb] to-[#03399b]" />

      <span className="absolute top-[429px] left-[1029px]">s o</span>

      <Win title="RMS Level" place="left-[517px] top-[156px] w-[512px] h-[321px]" bar={<MeterTools unit="Vrms" width="w-[69px]" />}><BarChart {...rmsV} /></Win>
      <Win title="THD+N Ratio" place="left-[1039px] top-[158px] w-[523px] h-[318px]" bar={<MeterTools unit="%" width="w-[51px]" />}><BarChart {...thdPct} /></Win>
      <Win title="RMS Level" place="left-[519px] top-[487px] w-[510px] h-[317px]" bar={<MeterTools unit="dBV" width="w-[69px]" />}><BarChart {...rmsDb} /></Win>
      <Win title="THD+N Ratio" place="left-[1040px] top-[487px] w-[523px] h-[315px]" bar={<MeterTools unit="dB" width="w-[51px]" />}><BarChart {...thdDb} /></Win>

      <Win
        title="Scope"
        place="left-[5px] top-[521px] w-[486px] h-[419px]"
        bar={
          <>
            <FileTools />
            <Sep />
            <ViewTools />
            <Sep />
            <span className="mr-[7px] ml-[5px]"><IconButton name="cross" label="Cursors" /></span>
            <Sep />
            <span className="mr-[7px] ml-[5px]"><IconButton name="gear" label="Settings" /></span>
            <Sep />
            <span className="w-[18px] shrink-0 pl-[5px]">X</span>
            <UnitSelect label="X unit" value="s" width="w-[42px]" />
            <span className="w-[17px] shrink-0 text-center">Y</span>
            <UnitSelect label="Y unit" value="V" width="w-[41px]" />
          </>
        }
      >
        <div className="flex flex-1 items-start">
          <ScopePlot />
          <div className="mt-[14px] ml-[28px] w-[118px] border border-black bg-white">
            <div className="flex h-5 items-center bg-[#2a7fb0] pr-[2px] text-[12px] font-semibold text-white">
              <span className="flex-1 text-center">Data</span>
              <svg viewBox="0 0 12 8" className="block h-2 w-3" fill="none" stroke="#fff"><path d="M0 4h4M4.500 0.500v7M5 2h6v4H5M11.500 0.500v7" /></svg>
            </div>
            <Check id="d1" label="Ch1" color="bg-[#12308a]" />
            <Check id="d2" label="Ch2" color="bg-[#c4201c]" />
          </div>
        </div>
        <div className="flex h-[49px] shrink-0 items-center border-t border-[#9a9a9a] bg-[#f0f0f0] pr-[6px] pb-[3px] pl-3">
          <span className="mr-[14px]">Interpolation:</span>
          <Radio id="i-on" label="On" on />
          <span className="w-[13px]" />
          <Radio id="i-off" label="Off" />
          <label htmlFor="residual" className="mr-3 ml-[25px]">Residual Display:</label>
          <Select id="residual" value="Off" width="w-[112px]" />
          <span className="ml-auto">Sh</span>
          <button type="button" className="mb-2 ml-[6px] h-6 w-8 border border-[#adadad] bg-[#e1e1e1]">&gt;&gt;</button>
        </div>
      </Win>

      <div aria-hidden="true" className='pointer-events-none absolute top-[841px] left-[1026px] font-["Noto_Sans_CJK_SC",sans-serif] text-[47px] leading-[66px] font-light whitespace-nowrap text-white [text-shadow:2px_2px_1px_rgba(90,90,90,0.55)]'>
        知乎 @AudioTOP音频网
      </div>
    </div>
  );
}
